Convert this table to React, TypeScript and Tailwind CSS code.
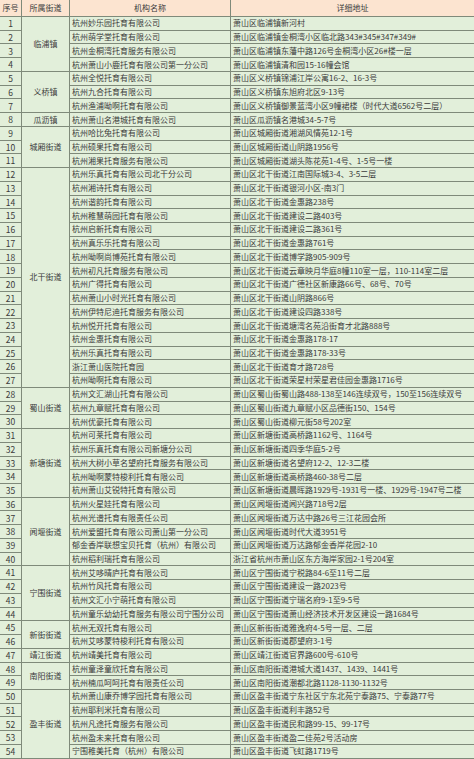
const rows: [string, string][] = [
  ['杭州妙乐园托育有限公司', '萧山区临浦镇新河村'],
  ['杭州萌学堂托育有限公司', '萧山区临浦镇金桐湾小区临北路343#345#347#349#'],
  ['杭州金桐湾托育服务有限公司', '萧山区临浦镇东藩中路126号金桐湾小区26#楼一层'],
  ['杭州萧山小鹿托育有限公司第一分公司', '萧山区临浦镇清和园15-16幢会馆'],
  ['杭州全悦托育有限公司', '萧山区义桥镇锦浦江岸公寓16-2、16-3号'],
  ['杭州九合托育有限公司', '萧山区义桥镇东旭府北区9-13号'],
  ['杭州渔浦呦啊托育有限公司', '萧山区义桥镇御景蓝湾小区9幢裙楼（时代大道6562号二层）'],
  ['杭州萧山名港城托育有限公司', '萧山区瓜沥镇名港城34-5-7号'],
  ['杭州哈比兔托育有限公司', '萧山区城厢街道湘湖风情苑12-1号'],
  ['杭州硕果托育有限公司', '萧山区城厢街道山阴路1956号'],
  ['杭州湘果托育服务有限公司', '萧山区城厢街道湖头陈花苑1-4号、1-5号一楼'],
  ['杭州乐真托育有限公司北干分公司', '萧山区北干街道江南国际城3-4、3-5二层'],
  ['杭州湘诗托育有限公司', '萧山区北干街道银河小区-南3门'],
  ['杭州谐韵托育有限公司', '萧山区北干街道金惠路238号'],
  ['杭州稚慧萌园托育有限公司', '萧山区北干街道建设二路403号'],
  ['杭州启新托育有限公司', '萧山区北干街道建设二路361号'],
  ['杭州真乐乐托育有限公司', '萧山区北干街道金惠路761号'],
  ['杭州呦啊尚博苑托育有限公司', '萧山区北干街道博学路905-909号'],
  ['杭州初凡托育服务有限公司', '萧山区北干街道云章映月华庭8幢110室一层，110-114室二层'],
  ['杭州广得托育有限公司', '萧山区北干街道广德社区新康路66号、68号、70号'],
  ['杭州萧山小时光托育有限公司', '萧山区北干街道山阴路866号'],
  ['杭州伊特尼迪托育服务有限公司', '萧山区北干街道建设四路338号'],
  ['杭州悦开托育有限公司', '萧山区北干街道塘湾名苑沿街育才北路888号'],
  ['杭州金惠托育有限公司', '萧山区北干街道金惠路178-17'],
  ['杭州乐真托育有限公司', '萧山区北干街道金惠路178-33号'],
  ['浙江萧山医院托育园', '萧山区北干街道育才路728号'],
  ['杭州呦啊托育有限公司', '萧山区北干街道荣星村荣星君佳园金惠路1716号'],
  ['杭州文汇湖山托育有限公司', '萧山区蜀山街蜀山路488-138至146连续双号，150至156连续双号'],
  ['杭州九章赋托育有限公司', '萧山区蜀山街道九章赋小区品德街150、154号'],
  ['杭州优豪托育有限公司', '萧山区蜀山街道柳元街58号202室'],
  ['杭州可莱托育有限公司', '萧山区新塘街道高桥路1162号、1164号'],
  ['杭州乐真托育有限公司新塘分公司', '萧山区新塘街道四季华庭5-2号'],
  ['杭州大树小草名望府托育服务有限公司', '萧山区新塘街道名望府12-2、12-3二楼'],
  ['杭州呦啊蒙特梭利托育有限公司', '萧山区新塘街道高桥路460-38号二层'],
  ['杭州萧山艾锐特托育有限公司', '萧山区新塘街道晨晖路1929号-1931号一楼、1929号-1947号二楼'],
  ['杭州火星娃托育有限公司', '萧山区闻堰街道闻兴路718号2层'],
  ['杭州光谱托育有限责任公司', '萧山区闻堰街道万达中路26号三江花园会所'],
  ['杭州爱盟托育有限公司萧山第一分公司', '萧山区闻堰街道时代大道3951号'],
  ['郁金香岸联想宝贝托育（杭州）有限公司', '萧山区闻堰街道万达路郁金香岸花园2-10'],
  ['杭州稻利瑞托育有限公司', '浙江省杭州市萧山区东方海岸家园2-1号204室'],
  ['杭州艾哆晴庐托育有限公司', '萧山区宁围街道宁税路84-6至11号二层'],
  ['杭州竹风托育有限公司', '萧山区宁围街道建设一路2023号'],
  ['杭州文汇小宁萌托育有限公司', '萧山区宁围街道宁瑞名府9-1至9-5号'],
  ['杭州童乐幼幼托育服务有限公司宁围分公司', '萧山区宁围街道萧山经济技术开发区建设一路1684号'],
  ['杭州无双托育有限公司', '萧山区新街街道雅逸府4-5号一层、二层'],
  ['杭州艾哆蒙特梭利托育有限公司', '萧山区新街街道郡望府3-1号'],
  ['杭州靖美托育有限公司', '萧山区靖江街道官界路600号-610号'],
  ['杭州童泽童欣托育有限公司', '萧山区南阳街道港城大道1437、1439、1441号'],
  ['杭州楠瓜呵呵托育有限责任公司', '萧山区南阳街道潮都北路1128-1130-1132号'],
  ['杭州萧山康乔博学园托育有限公司', '萧山区盈丰街道宁东社区宁东北苑宁泰路75、宁泰路77号'],
  ['杭州耶利米托育有限公司', '萧山区盈丰街道利丰路52号'],
  ['杭州凡途托育服务有限公司', '萧山区盈丰街道民和路99-15、99-17号'],
  ['杭州盈未来托育有限公司', '萧山区盈丰街道盈二佳苑2号活动房'],
  ['宁围稚美托育（杭州）有限公司', '萧山区盈丰街道飞虹路1719号'],
]

const groups: [string, number][] = [
  ['临浦镇', 4],
  ['义桥镇', 3],
  ['瓜沥镇', 1],
  ['城厢街道', 3],
  ['北干街道', 16],
  ['蜀山街道', 3],
  ['新塘街道', 5],
  ['闻堰街道', 5],
  ['宁围街道', 4],
  ['新街街道', 2],
  ['靖江街道', 1],
  ['南阳街道', 2],
  ['盈丰街道', 5],
]

const span: Record<number, string> = {
  1: 'row-span-1',
  2: 'row-span-2',
  3: 'row-span-3',
  4: 'row-span-4',
  5: 'row-span-5',
  16: 'row-span-16',
}

const cell = 'bg-[#e2efda] text-[#3b3b3b] leading-none flex items-center'
const head = 'bg-[#fce4d0] text-[#3b3b3b] leading-none flex items-center justify-center'

export default function App() {
  // where each district cell starts, keyed by row index
  const starts: Record<number, [string, number]> = {}
  let r = 0
  for (const g of groups) {
    starts[r] = g
    r += g[1]
  }

  return (
    <div
      className="w-[474px] h-[759px] overflow-hidden bg-[#7f8a7a] grid grid-cols-[21px_47px_160px_1fr] grid-rows-[16px_repeat(54,12.74px)] gap-px text-[8px]"
      style={{ fontFamily: '"Noto Sans CJK SC", "Noto Sans", sans-serif' }}
    >
      <div className={head}>序号</div>
      <div className={head}>所属街道</div>
      <div className={head}>机构名称</div>
      <div className={head}>详细地址</div>
      {rows.map(([name, addr], i) => (
        <Row key={i} i={i} name={name} addr={addr} group={starts[i]} />
      ))}
    </div>
  )
}

function Row(props: { i: number; name: string; addr: string; group?: [string, number] }) {
  const { i, name, addr, group } = props
  return (
    <>
      <div className={`${cell} col-start-1 justify-center text-[8.5px]`}>{i + 1}</div>
      {group && (
        <div className={`${cell} col-start-2 justify-center ${span[group[1]]}`}>{group[0]}</div>
      )}
      <div className={`${cell} col-start-3 pl-[2px] whitespace-nowrap overflow-hidden`}>{name}</div>
      <div className={`${cell} col-start-4 pl-[2px] whitespace-nowrap overflow-hidden`}>{addr}</div>
    </>
  )
}
